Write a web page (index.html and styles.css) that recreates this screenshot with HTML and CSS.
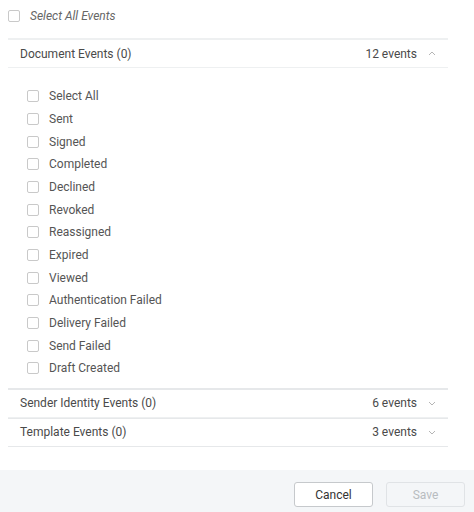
FILE: index.html
```html
<!DOCTYPE html>
<html>
<head>
<meta charset="utf-8">
<link rel="stylesheet" href="styles.css">
</head>
<body>
<div class="panel">
  <label class="all-row"><span class="cb"></span><span class="all-text">Select All Events</span></label>
  <div class="section open">
    <div class="sec-head"><span class="sec-title">Document Events (0)</span><span class="sec-count">12 events</span>
      <svg class="chev" width="8" height="5" viewBox="0 0 8 5"><polyline points="1,4 4,1 7,4" fill="none" stroke="#b5b5b5" stroke-width="1"/></svg></div>
    <ul class="items">
      <li><span class="cb"></span>Select All</li>
      <li><span class="cb"></span>Sent</li>
      <li><span class="cb"></span>Signed</li>
      <li><span class="cb"></span>Completed</li>
      <li><span class="cb"></span>Declined</li>
      <li><span class="cb"></span>Revoked</li>
      <li><span class="cb"></span>Reassigned</li>
      <li><span class="cb"></span>Expired</li>
      <li><span class="cb"></span>Viewed</li>
      <li><span class="cb"></span>Authentication Failed</li>
      <li><span class="cb"></span>Delivery Failed</li>
      <li><span class="cb"></span>Send Failed</li>
      <li><span class="cb"></span>Draft Created</li>
    </ul>
  </div>
  <div class="section">
    <div class="sec-head"><span class="sec-title">Sender Identity Events (0)</span><span class="sec-count">6 events</span>
      <svg class="chev" width="8" height="5" viewBox="0 0 8 5"><polyline points="1,1 4,4 7,1" fill="none" stroke="#b5b5b5" stroke-width="1"/></svg></div>
  </div>
  <div class="section">
    <div class="sec-head"><span class="sec-title">Template Events (0)</span><span class="sec-count">3 events</span>
      <svg class="chev" width="8" height="5" viewBox="0 0 8 5"><polyline points="1,1 4,4 7,1" fill="none" stroke="#b5b5b5" stroke-width="1"/></svg></div>
  </div>
</div>
<div class="footer">
  <button class="btn cancel">Cancel</button>
  <button class="btn save" disabled>Save</button>
</div>
</body>
</html>
```
FILE: styles.css
```css
html, body {
  margin: 0;
  padding: 0;
  background: #fff;
  font-family: Roboto, "Liberation Sans", sans-serif;
  font-size: 12px;
  color: #4a4a4a;
}
.panel {
  width: 440px;
  margin-left: 8px;
  height: 470px;
}
.cb {
  display: inline-block;
  width: 10px;
  height: 10px;
  border: 1px solid #c9c9c9;
  border-radius: 2px;
  background: #fff;
  flex: none;
}
.all-row {
  display: flex;
  align-items: center;
  height: 32px;
  margin-bottom: 6px;
}
.all-text {
  margin-left: 10px;
  font-style: italic;
  color: #666;
}
.section {
  border-top: 2px solid #eef0f1;
}
.section + .section {
  border-top: 1px solid #e6e8ea;
}
.sec-head {
  display: flex;
  align-items: center;
  height: 27px;
  padding: 0 12px;
  border-bottom: 1px solid #eef0f1;
  color: #4a4a4a;
}
.section:last-child .sec-head {
  border-bottom: 1px solid #e6e8ea;
}
.sec-title {
  flex: 1;
}
.chev {
  margin-left: 11px;
}
.items {
  list-style: none;
  margin: 0;
  padding: 17px 0 8px 19px;
  border-bottom: 1px solid #e6e8ea;
}
.items li {
  display: flex;
  align-items: center;
  height: 22.67px;
  color: #555;
}
.items li .cb {
  margin-right: 10px;
}
.footer {
  height: 42px;
  box-sizing: border-box;
  background: #f4f6f8;
  display: flex;
  justify-content: flex-end;
  align-items: flex-start;
  gap: 13px;
  padding: 12px 9px 0 0;
}
.btn {
  width: 79px;
  height: 25px;
  border-radius: 3px;
  font-family: Roboto, "Liberation Sans", sans-serif;
  font-size: 12px;
}
.cancel {
  background: #fff;
  border: 1px solid #c6c9cc;
  color: #333;
}
.save {
  background: #f4f6f8;
  border: 1px solid #e0e3e6;
  color: #b8bcc0;
}
```
